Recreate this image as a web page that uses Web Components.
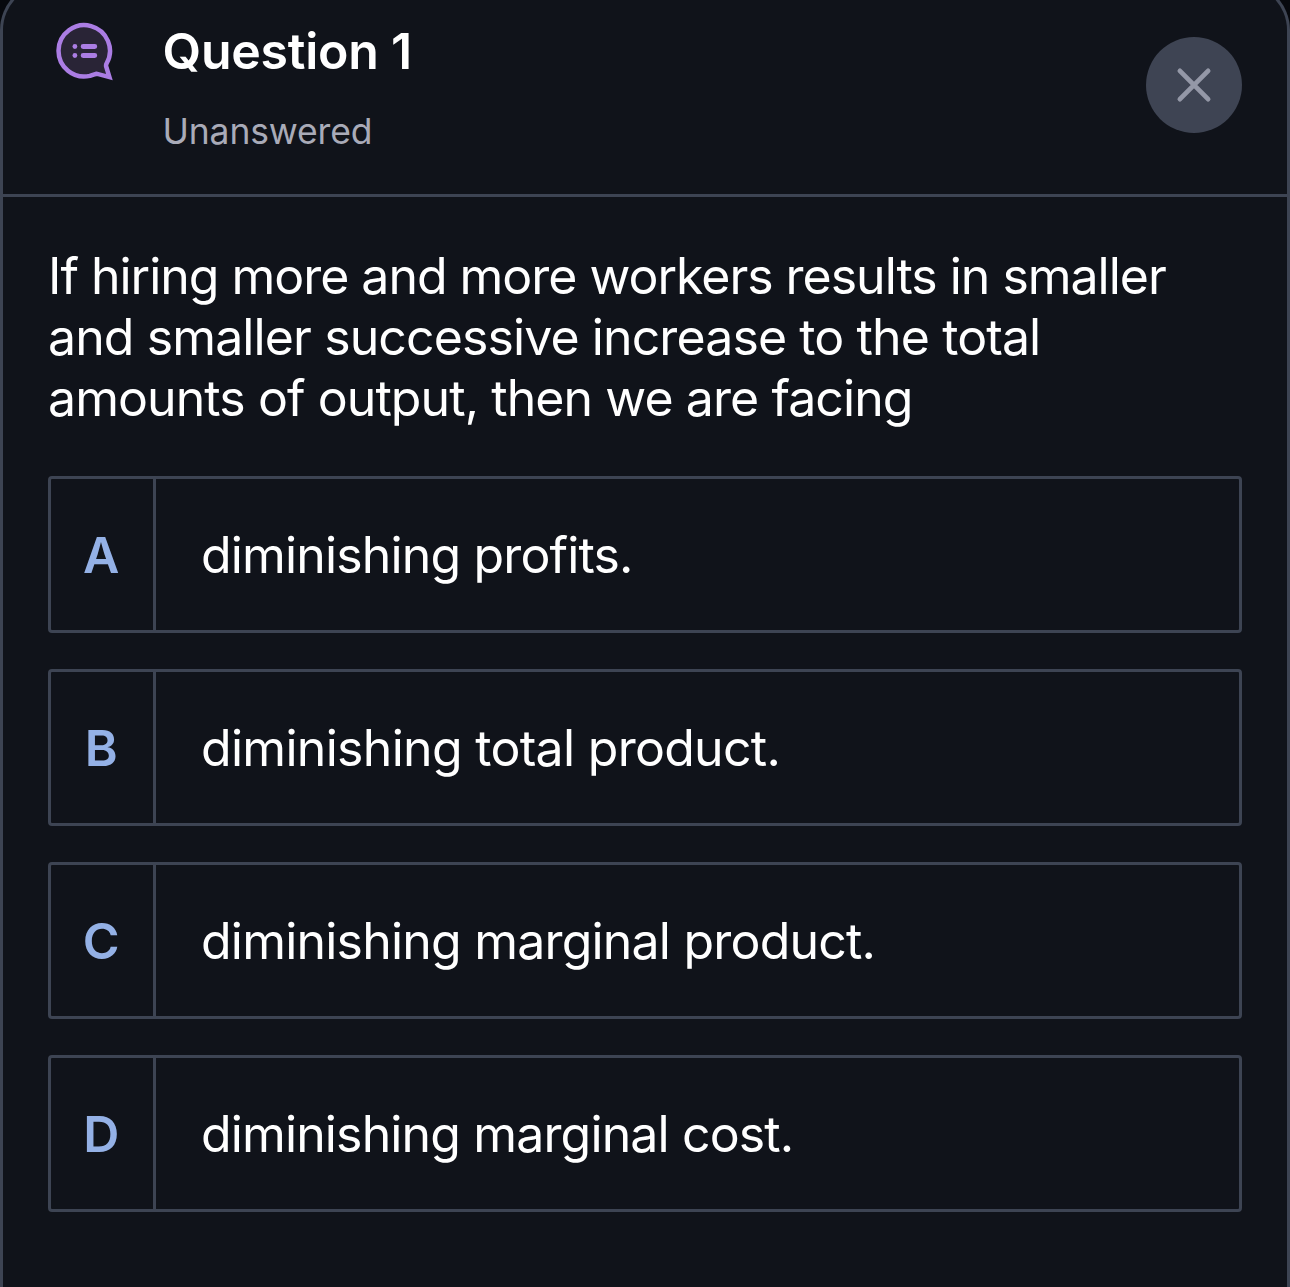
<!DOCTYPE html>
<html lang="en">
<head>
<meta charset="utf-8">
<title>Question 1</title>
<style>
    body {
        margin: 0;
        height: 1287px;
        overflow: hidden;
        background: #07090e;
        font-family: Inter, "Liberation Sans", sans-serif;
        color: #fff;
        --line: #3d4453;
        --panel: #10131a;
    }
</style>
</head>
<body>
<question-card>
    <question-header slot="header">
        Question 1
        <span slot="status">Unanswered</span>
    </question-header>
    <question-prompt>
        <span style="letter-spacing: -1.02px">If hiring more and more workers results in smaller</span>
        <span style="letter-spacing: -0.89px">and smaller successive increase to the total</span>
        <span style="letter-spacing: -0.92px">amounts of output, then we are facing</span>
    </question-prompt>
    <answer-option letter="A" style="--tracking: -0.84px">diminishing profits.</answer-option>
    <answer-option letter="B" style="--tracking: -0.7px">diminishing total product.</answer-option>
    <answer-option letter="C" style="--tracking: -0.79px">diminishing marginal product.</answer-option>
    <answer-option letter="D" style="--tracking: -0.86px">diminishing marginal cost.</answer-option>
</question-card>

<script>
class QuestionCard extends HTMLElement {
    constructor() {
        super();
        this.attachShadow({mode: 'open'});
        this.shadowRoot.innerHTML = `
            <style>
                :host {
                    display: block;
                    box-sizing: border-box;
                    height: 1305px;
                    margin-top: -18px;
                    border: 3px solid var(--line);
                    border-bottom: 0;
                    border-radius: 48px 48px 0 0;
                    background: var(--panel);
                }
                main {
                    display: flex;
                    flex-direction: column;
                    gap: 36px;
                    padding: 49px 45px 0;
                }
            </style>
            <slot name="header"></slot>
            <main><slot></slot></main>
        `;
    }
}

class QuestionHeader extends HTMLElement {
    constructor() {
        super();
        this.attachShadow({mode: 'open'});
        this.shadowRoot.innerHTML = `
            <style>
                :host {
                    display: flex;
                    box-sizing: border-box;
                    height: 212px;
                    padding: 36px 45px 0;
                    border-bottom: 3px solid var(--line);
                }
                chat-icon {
                    margin-right: 42.5px;
                }
                .titles {
                    flex: 1;
                }
                h1 {
                    margin: 0;
                    font-size: 50px;
                    line-height: 60px;
                    font-weight: 600;
                    letter-spacing: -0.25px;
                }
                p {
                    margin: 29px 0 0;
                    font-size: 35.5px;
                    line-height: 44px;
                    letter-spacing: -0.15px;
                    color: #a9abb8;
                }
                close-button {
                    margin-top: 16px;
                }
            </style>
            <chat-icon></chat-icon>
            <div class="titles">
                <h1><slot></slot></h1>
                <p><slot name="status"></slot></p>
            </div>
            <close-button></close-button>
        `;
    }
}

class ChatIcon extends HTMLElement {
    constructor() {
        super();
        this.attachShadow({mode: 'open'});
        this.shadowRoot.innerHTML = `
            <style>
                :host { display: block; width: 72px; height: 72px; }
                svg { display: block; }
            </style>
            <svg width="72" height="72" viewBox="0.4 0 72 72" fill="none">
                <path d="M59 42.5A25.7 25.7 0 1 0 42.3 54.9Q46.5 53.3 49 52.7L61.8 56.1L58.5 45.2Q58.3 43.7 59 42.5Z" fill="#292436" stroke="#ab7de4" stroke-width="4.5"/>
                <path d="M35.5 25.5H47.2M35.5 34.5H47.2" stroke="#ab7de4" stroke-width="4.8" stroke-linecap="round"/>
                <circle cx="27.3" cy="25.5" r="2.4" fill="#ab7de4"/>
                <circle cx="27.3" cy="34.5" r="2.4" fill="#ab7de4"/>
            </svg>
        `;
    }
}

class CloseButton extends HTMLElement {
    constructor() {
        super();
        this.attachShadow({mode: 'open'});
        this.shadowRoot.innerHTML = `
            <style>
                :host { display: block; width: 96px; height: 96px; }
                button {
                    all: unset;
                    display: block;
                    width: 96px;
                    height: 96px;
                    border-radius: 50%;
                    background: #3e4453;
                }
                svg { display: block; }
            </style>
            <button aria-label="Close">
                <svg width="96" height="96" viewBox="0 0 96 96">
                    <path d="M33.9 33.9L62.1 62.1M62.1 33.9L33.9 62.1" stroke="#9498a7" stroke-width="4.8" stroke-linecap="round"/>
                </svg>
            </button>
        `;
    }
}

class QuestionPrompt extends HTMLElement {
    constructor() {
        super();
        this.attachShadow({mode: 'open'});
        this.shadowRoot.innerHTML = `
            <style>
                :host {
                    display: block;
                    height: 194px;
                    font-size: 50px;
                    line-height: 61.2px;
                    white-space: nowrap;
                }
                ::slotted(span) {
                    display: block;
                }
            </style>
            <slot></slot>
        `;
    }
}

class AnswerOption extends HTMLElement {
    constructor() {
        super();
        this.attachShadow({mode: 'open'});
        this.shadowRoot.innerHTML = `
            <style>
                :host {
                    display: flex;
                    box-sizing: border-box;
                    height: 157px;
                    border: 3px solid var(--line);
                    border-radius: 4px;
                    font-size: 50px;
                    line-height: 60px;
                }
                .letter {
                    display: flex;
                    box-sizing: border-box;
                    align-items: center;
                    justify-content: center;
                    width: 105px;
                    padding-right: 1.5px;
                    border-right: 3px solid var(--line);
                    font-weight: 600;
                    color: #94b1e6;
                }
                .text {
                    display: flex;
                    align-items: center;
                    padding-left: 45px;
                    letter-spacing: var(--tracking, -0.8px);
                }
            </style>
            <div class="letter"></div>
            <div class="text"><slot></slot></div>
        `;
        this.shadowRoot.querySelector(".letter").textContent = this.getAttribute("letter");
    }
}

customElements.define("chat-icon", ChatIcon);
customElements.define("close-button", CloseButton);
customElements.define("question-header", QuestionHeader);
customElements.define("question-prompt", QuestionPrompt);
customElements.define("answer-option", AnswerOption);
customElements.define("question-card", QuestionCard);
</script>
</body>
</html>
